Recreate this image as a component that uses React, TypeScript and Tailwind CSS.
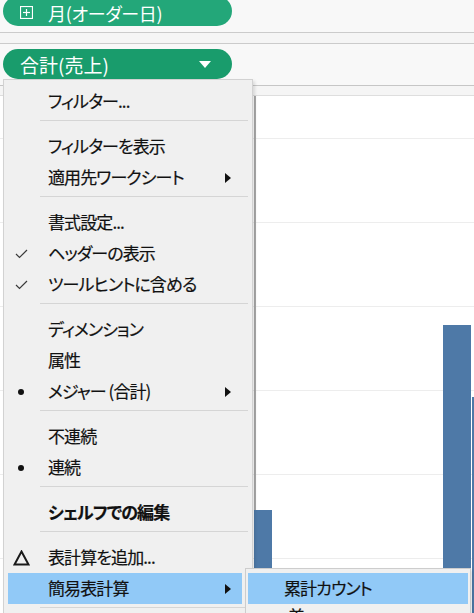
import React from 'react';

type MenuEntry =
  | { kind: 'sep' }
  | { kind: 'item'; label: string; icon?: 'check' | 'dot' | 'delta'; arrow?: boolean; bold?: boolean; active?: boolean };

const entries: MenuEntry[] = [
  { kind: 'item', label: 'フィルター...' },
  { kind: 'sep' },
  { kind: 'item', label: 'フィルターを表示' },
  { kind: 'item', label: '適用先ワークシート', arrow: true },
  { kind: 'sep' },
  { kind: 'item', label: '書式設定...' },
  { kind: 'item', label: 'ヘッダーの表示', icon: 'check' },
  { kind: 'item', label: 'ツールヒントに含める', icon: 'check' },
  { kind: 'sep' },
  { kind: 'item', label: 'ディメンション' },
  { kind: 'item', label: '属性' },
  { kind: 'item', label: 'メジャー (合計)', icon: 'dot', arrow: true },
  { kind: 'sep' },
  { kind: 'item', label: '不連続' },
  { kind: 'item', label: '連続', icon: 'dot' },
  { kind: 'sep' },
  { kind: 'item', label: 'シェルフでの編集', bold: true },
  { kind: 'sep' },
  { kind: 'item', label: '表計算を追加...', icon: 'delta' },
  { kind: 'item', label: '簡易表計算', arrow: true, active: true },
  { kind: 'sep' },
];

function GutterIcon({ icon }: { icon?: 'check' | 'dot' | 'delta' }) {
  if (icon === 'check')
    return (
      <svg width="13" height="10" viewBox="0 0 13 10">
        <polyline points="1,5 4.5,8.5 12,1" fill="none" stroke="#3a3a3a" strokeWidth="1.2" />
      </svg>
    );
  if (icon === 'dot') return <div className="w-[6px] h-[6px] rounded-full bg-[#111]" />;
  if (icon === 'delta')
    return (
      <svg width="17" height="16" viewBox="0 0 17 16">
        <polygon points="8.5,1.5 15.5,14.5 1.5,14.5" fill="none" stroke="#1a1a1a" strokeWidth="2" strokeLinejoin="miter" />
      </svg>
    );
  return null;
}

function Arrow() {
  return (
    <svg width="6" height="10" viewBox="0 0 6 10" className="mr-[11px]">
      <polygon points="0,0 6,5 0,10" fill="#111" />
    </svg>
  );
}

function GridLines() {
  return (
    <div className="flex flex-col pt-[42px]">
      {[0, 1, 2, 3, 4, 5].map((i) => (
        <div key={i} className="h-[84px] border-t border-[#ededed]" />
      ))}
    </div>
  );
}

export default function App() {
  return (
    <div className="relative w-[474px] h-[613px] overflow-hidden bg-white font-['Noto_Sans_CJK_JP','Noto_Sans',sans-serif] [font-feature-settings:'palt']">
      {/* Shelves */}
      <div className="bg-[#f8f8f8]">
        <div className="h-[32px] px-[3px] pb-[6px] flex items-end overflow-hidden">
          <div className="h-[30px] w-[229px] rounded-full bg-[#23a779] flex items-center text-white shrink-0 pt-[3px]">
            <svg width="13" height="13" viewBox="0 0 13 13" className="ml-[17px]">
              <rect x="0.5" y="0.5" width="12" height="12" fill="none" stroke="white" strokeWidth="1.2" />
              <line x1="6.5" y1="3" x2="6.5" y2="10" stroke="white" strokeWidth="1.2" />
              <line x1="3" y1="6.5" x2="10" y2="6.5" stroke="white" strokeWidth="1.2" />
            </svg>
            <span className="ml-[15px] text-[18px] leading-[20px] tracking-[-0.3px]">月(オーダー日)</span>
          </div>
        </div>
        <div className="h-[12px] border-y border-[#cbcbcb] bg-[#f5f5f5]" />
        <div className="h-[41px] pt-[5px] px-[3px]">
          <div className="h-[30px] w-[229px] rounded-full bg-[#199c6c] flex items-center text-white">
            <span className="ml-[17px] text-[19px] leading-none flex-1">合計(売上)</span>
            <svg width="12" height="7" viewBox="0 0 12 7" className="mr-[21px]">
              <polygon points="0,0 12,0 6,7" fill="white" />
            </svg>
          </div>
        </div>
      </div>

      {/* View header strip */}
      <div className="h-[11px] border-t border-b border-[#c6c6c6] border-b-[#dedede] bg-[#f5f5f5]" />

      {/* Pane */}
      <div className="flex h-[517px]">
        <div className="w-[254px] shrink-0">
          <GridLines />
        </div>
        <div className="w-[2px] bg-[#a9a9a9] shrink-0" />
        <div className="relative flex-1">
          <GridLines />
          <div className="absolute -left-[2px] w-[18px] top-[414px] bottom-0 bg-[#4e79a7]" />
          <div className="absolute left-[187px] w-[28px] top-[229px] bottom-0 bg-[#4e79a7]" />
          <div className="absolute left-[216px] w-[10px] top-[301px] bottom-0 bg-[#4e79a7]" />
        </div>
      </div>

      {/* Context menu */}
      <div className="absolute left-[3px] top-[79px] w-[250px] h-[570px] bg-[#f0f0f0] border border-[#d2d2d2] shadow-[2px_2px_3px_rgba(0,0,0,0.12)] pt-[6px] text-[17px] text-[#111] tracking-[-0.9px] [-webkit-text-stroke:0.2px_#111]">
        {entries.map((e, i) =>
          e.kind === 'sep' ? (
            <div key={i} className="h-[14px] pt-[3px] ml-[36px] mr-[4px]">
              <div className="h-px bg-[#d5d5d5]" />
            </div>
          ) : (
            <div
              key={i}
              className={`flex items-center h-[31px] ml-[4px] mr-[10px] ${e.active ? 'bg-[#91c9f7]' : ''}`}
            >
              <div className="w-[26px] flex justify-center items-center">
                <GutterIcon icon={e.icon} />
              </div>
              <span className={`ml-[14px] flex-1 leading-none whitespace-nowrap pb-[2px] ${e.bold ? 'font-bold' : ''}`}>
                {e.label}
              </span>
              {e.arrow && <Arrow />}
            </div>
          )
        )}
      </div>

      {/* Submenu */}
      <div className="absolute left-[245px] top-[568px] w-[226px] h-[90px] bg-[#f0f0f0] border border-[#cdcdcd] shadow-[2px_2px_3px_rgba(0,0,0,0.12)] pt-[4px] text-[17px] text-[#111] tracking-[-0.9px] [-webkit-text-stroke:0.2px_#111]">
        <div className="h-[31px] mx-[2px] bg-[#91c9f7] flex items-center">
          <span className="ml-[36px] leading-none pb-[2px]">累計カウント</span>
        </div>
        <div className="h-[31px] mx-[2px] flex items-start pt-[3px]">
          <span className="ml-[40px] leading-none">差</span>
        </div>
      </div>
    </div>
  );
}
